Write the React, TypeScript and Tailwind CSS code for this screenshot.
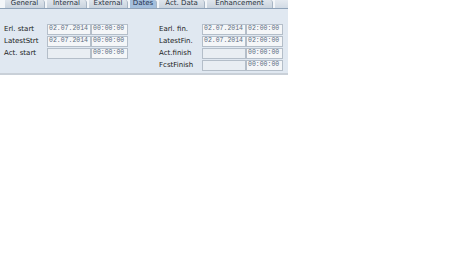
import React from "react";

const tabs = [
  { label: "General", w: "w-[40px]" },
  { label: "Internal", w: "w-[40px]" },
  { label: "External", w: "w-[39px]" },
  { label: "Dates", w: "w-[27px]", active: true },
  { label: "Act. Data", w: "w-[46px]" },
  { label: "Enhancement", w: "w-[66px]" },
];

function Box({ value, w, empty }: { value?: string; w: string; empty?: boolean }) {
  return (
    <div
      className={`${w} h-[11px] border border-[#b4bec9] ${empty ? "bg-[#e9eef3]" : "bg-[#f4f6f8]"} flex items-center pl-[1px] overflow-hidden whitespace-nowrap text-[6.5px] leading-none text-[#5a6c82] font-['Liberation_Mono',monospace]`}
    >
      {value}
    </div>
  );
}

function Row({ label, date, time }: { label: string; date?: string; time: string }) {
  return (
    <div className="flex items-center h-[12px]">
      <div className="w-[43px] text-[7px] leading-none text-[#1a1a1a]">{label}</div>
      <Box w="w-[44px]" value={date} empty={!date} />
      <Box w="w-[37px]" value={time} />
    </div>
  );
}

export default function App() {
  return (
    <div className="w-[474px] h-[266px] bg-white font-['DejaVu_Sans','Liberation_Sans',sans-serif]">
      <div className="w-[288px]">
        {/* Tab strip */}
        <div className="flex h-[9px] bg-[#f3f6f9] border-b border-[#8fa3b9] pl-[5px] gap-[2px]">
          {tabs.map((t) => (
            <div
              key={t.label}
              className={`${t.w} h-full flex items-end justify-center pb-[1px] text-[7px] leading-none rounded-tr-[3px] border-r border-[#a7b5c4] ${
                t.active ? "bg-[#a4bfdc] text-[#1e3250]" : "bg-gradient-to-b from-[#dfe5ec] to-[#c9d3de] text-[#2a3340]"
              }`}
            >
              {t.label}
            </div>
          ))}
          <div className="flex-1 bg-gradient-to-b from-[#e5eaf0] to-[#d2dbe5]" />
        </div>

        {/* Panel */}
        <div className="h-[66px] bg-[#e0e8f1] border-b-2 border-[#c9d0d8] flex pt-[14px] pl-[4px]">
          <div className="flex flex-col">
            <Row label="Erl. start" date="02.07.2014" time="00:00:00" />
            <Row label="LatestStrt" date="02.07.2014" time="00:00:00" />
            <Row label="Act. start" time="00:00:00" />
          </div>
          <div className="flex flex-col ml-[31px]">
            <Row label="Earl. fin." date="02.07.2014" time="02:00:00" />
            <Row label="LatestFin." date="02.07.2014" time="02:00:00" />
            <Row label="Act.finish" time="00:00:00" />
            <Row label="FcstFinish" time="00:00:00" />
          </div>
        </div>
      </div>
    </div>
  );
}
